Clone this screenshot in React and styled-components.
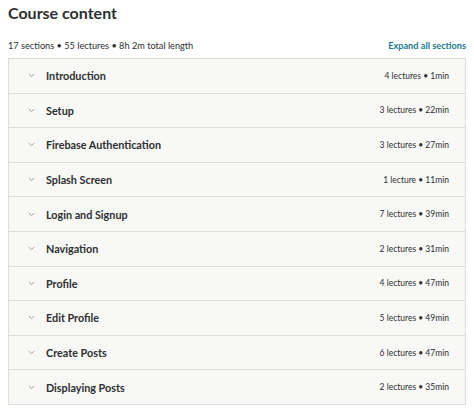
import React from 'react';
import styled, { createGlobalStyle } from 'styled-components';

const GlobalStyle = createGlobalStyle`
    body {
        margin: 0;
        background: #ffffff;
        font-family: Lato, "Liberation Sans", sans-serif;
        color: #1c1d1f;
    }
`;

const Wrapper = styled.div`
    width: 474px;
    padding: 0 8px;
    box-sizing: border-box;
`;

const Title = styled.h2`
    margin: 0;
    padding-top: 3px;
    font-size: 16px;
    font-weight: 700;
    line-height: 20px;
    color: #2d2f31;
`;

const SummaryBar = styled.div`
    display: flex;
    justify-content: space-between;
    align-items: center;
    margin-top: 15px;
    height: 14px;
    font-size: 9.2px;
`;

const Summary = styled.span`
    color: #2d2f31;
`;

const ExpandLink = styled.span`
    color: #1a7a8e;
    font-weight: 700;
`;

const List = styled.div`
    margin-top: 6px;
    border: 1px solid #dedddA;
`;

const Row = styled.div`
    display: flex;
    align-items: center;
    height: 33.6px;
    padding: 0 16px 0 19px;
    background: #f8f8f6;
    border-top: ${p => (p.first ? 'none' : '1px solid #dedddA')};
`;

const Chevron = styled.svg`
    width: 7px;
    height: 5px;
    margin-right: 11px;
    flex-shrink: 0;
`;

const SectionTitle = styled.span`
    flex: 1;
    font-size: 10.8px;
    font-weight: 700;
    color: #2d2f31;
`;

const Meta = styled.span`
    font-size: 8.5px;
    color: #2d2f31;
`;

const sections = [
    ['Introduction', '4 lectures • 1min'],
    ['Setup', '3 lectures • 22min'],
    ['Firebase Authentication', '3 lectures • 27min'],
    ['Splash Screen', '1 lecture • 11min'],
    ['Login and Signup', '7 lectures • 39min'],
    ['Navigation', '2 lectures • 31min'],
    ['Profile', '4 lectures • 47min'],
    ['Edit Profile', '5 lectures • 49min'],
    ['Create Posts', '6 lectures • 47min'],
    ['Displaying Posts', '2 lectures • 35min'],
];

const App = () => {
    return (
        <Wrapper>
            <GlobalStyle />
            <Title>Course content</Title>
            <SummaryBar>
                <Summary>17 sections • 55 lectures • 8h 2m total length</Summary>
                <ExpandLink>Expand all sections</ExpandLink>
            </SummaryBar>
            <List>
                {sections.map(([name, meta], i) => (
                    <Row key={name} first={i === 0}>
                        <Chevron viewBox="0 0 7 5">
                            <path d="M0.8 1 L3.5 3.7 L6.2 1" fill="none" stroke="#9a9d9f" strokeWidth="1" />
                        </Chevron>
                        <SectionTitle>{name}</SectionTitle>
                        <Meta>{meta}</Meta>
                    </Row>
                ))}
            </List>
        </Wrapper>
    );
};

export default App;
